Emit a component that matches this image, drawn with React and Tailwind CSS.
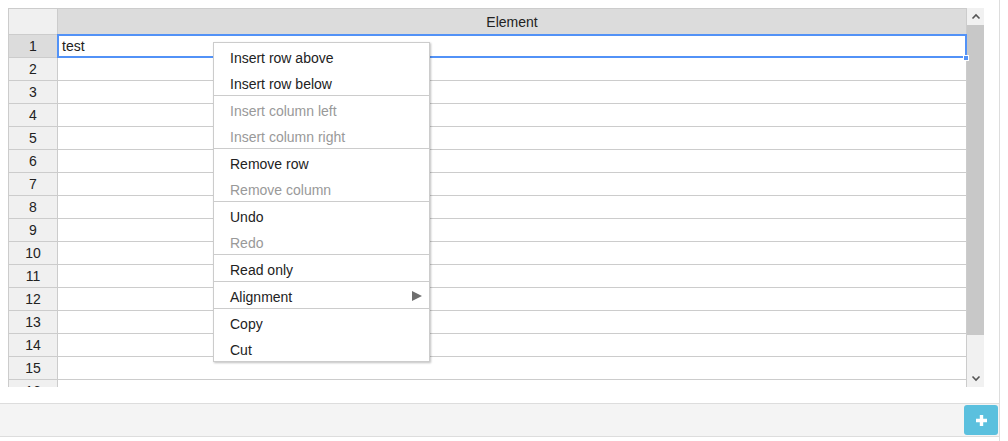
import React from "react";

const rows = Array.from({ length: 16 }, (_, i) => i + 1);

// context menu groups, separated by a line
const menuGroups = [
  [
    { label: "Insert row above" },
    { label: "Insert row below" },
  ],
  [
    { label: "Insert column left", disabled: true },
    { label: "Insert column right", disabled: true },
  ],
  [
    { label: "Remove row" },
    { label: "Remove column", disabled: true },
  ],
  [
    { label: "Undo" },
    { label: "Redo", disabled: true },
  ],
  [{ label: "Read only" }],
  [{ label: "Alignment", submenu: true }],
  [
    { label: "Copy" },
    { label: "Cut" },
  ],
];

const ContextMenu = () => (
  <div className="absolute left-[213px] top-[42px] w-[217px] bg-white border border-[#ccc] shadow-[1px_1px_2px_rgba(0,0,0,0.25)] z-20">
    {menuGroups.map((group, gi) => (
      <div key={gi} className={gi > 0 ? "border-t border-[#ccc]" : ""}>
        {group.map((item) => (
          <div
            key={item.label}
            className={`relative h-[26px] pl-[16px] pr-2 flex items-center text-[14px] ${
              item.disabled ? "text-[#999]" : "text-[#222]"
            }`}
          >
            <span className="pt-[4px]">{item.label}</span>
            {item.submenu && (
              <span className="absolute right-[7px] top-[9px] w-0 h-0 border-y-[5px] border-y-transparent border-l-[10px] border-l-[#6f6f6f]" />
            )}
          </div>
        ))}
      </div>
    ))}
  </div>
);

const Chevron = ({ up }) => (
  <svg width="10" height="7" viewBox="0 0 10 7" className="text-[#555]">
    <path
      d={up ? "M1.5 5.5 L5 2 L8.5 5.5" : "M1.5 1.5 L5 5 L8.5 1.5"}
      fill="none"
      stroke="currentColor"
      strokeWidth="1.6"
    />
  </svg>
);

const App = () => {
  return (
    <div
      className="relative w-[1000px] h-[441px] bg-white border-r border-[#ddd]"
      style={{ fontFamily: '"Liberation Sans", Arial, sans-serif' }}
    >
      <div className="pt-[8px] pl-[8px] h-[403px]">
        {/* grid viewport */}
        <div className="flex h-[379px] overflow-hidden">
          <div className="w-[959px] border-l border-t border-[#ccc]">
            {/* header */}
            <div className="flex h-[26px] border-b border-[#ccc]">
              <div className="w-[49px] bg-[#f0f0f0] border-r border-[#ccc]" />
              <div className="flex-1 bg-[#dcdcdc] border-r border-[#ccc] flex items-center justify-center pt-[2px] text-[14px] text-[#222]">
                Element
              </div>
            </div>
            {rows.map((n) => (
              <div key={n} className="flex h-[23px] border-b border-[#ccc]">
                <div
                  className={`w-[49px] border-r border-[#ccc] flex items-center justify-center text-[14px] text-[#222] ${
                    n === 1 ? "bg-[#dcdcdc]" : "bg-[#f0f0f0]"
                  }`}
                >
                  {n}
                </div>
                <div className="relative flex-1 border-r border-[#ccc] flex items-center pl-[4px] text-[14px] text-[#222]">
                  {n === 1 && (
                    <>
                      test
                      <span className="absolute -left-[1px] -top-[1px] -right-[1px] -bottom-[1px] border-2 border-[#5292f7] pointer-events-none" />
                      <span className="absolute -right-[3px] -bottom-[4px] w-[6px] h-[6px] bg-[#5292f7] border border-white z-10" />
                    </>
                  )}
                </div>
              </div>
            ))}
          </div>
          {/* scrollbar */}
          <div className="w-[17px] bg-[#f1f1f1] flex flex-col">
            <div className="h-[17px] flex items-center justify-center">
              <Chevron up />
            </div>
            <div className="h-[310px] bg-[#c8c8c8]" />
            <div className="flex-1" />
            <div className="h-[17px] flex items-center justify-center">
              <Chevron />
            </div>
          </div>
        </div>
      </div>

      {/* bottom bar */}
      <div className="h-[34px] bg-[#f4f4f4] border-t border-b border-[#ddd] flex justify-end items-start pt-[1px] pr-[1px]">
        <button className="w-[34px] h-[30px] rounded-[3px] bg-[#5bc0de] text-white flex items-center justify-center">
          <svg width="13" height="13" viewBox="0 0 13 13">
            <path d="M6.5 1 V12 M1 6.5 H12" stroke="white" strokeWidth="3.4" />
          </svg>
        </button>
      </div>

      <ContextMenu />
    </div>
  );
};

export default App;
